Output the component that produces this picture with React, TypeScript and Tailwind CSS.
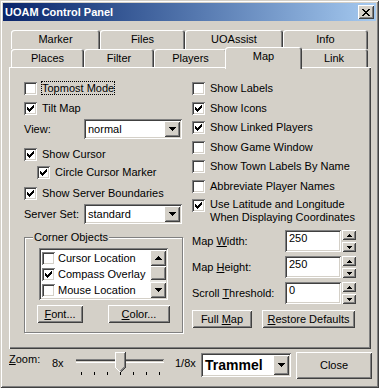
import React from 'react';

const raised =
  'shadow-[inset_1px_1px_0_#fff,inset_-1px_-1px_0_#404040,inset_2px_2px_0_#d4d0c8,inset_-2px_-2px_0_#808080]';
const sunken =
  'shadow-[inset_1px_1px_0_#808080,inset_-1px_-1px_0_#fff,inset_2px_2px_0_#404040,inset_-2px_-2px_0_#d4d0c8]';

function Down({ w = 7, h = 4 }: { w?: number; h?: number }) {
  return (
    <svg width={w} height={h} viewBox={`0 0 ${w} ${h}`} shapeRendering="crispEdges">
      <polygon points={`0,0 ${w},0 ${w / 2},${h}`} fill="#000" />
    </svg>
  );
}

function Up({ w = 7, h = 4 }: { w?: number; h?: number }) {
  return (
    <svg width={w} height={h} viewBox={`0 0 ${w} ${h}`} shapeRendering="crispEdges">
      <polygon points={`0,${h} ${w},${h} ${w / 2},0`} fill="#000" />
    </svg>
  );
}

function Box({ on }: { on?: boolean }) {
  return (
    <span className={`flex h-[13px] w-[13px] shrink-0 items-center justify-center bg-white ${sunken}`}>
      {on && (
        <svg width="7" height="7" viewBox="0 0 7 7" shapeRendering="crispEdges">
          <path
            d="M0 2h1v3H0z M1 3h1v3H1z M2 4h1v3H2z M3 3h1v3H3z M4 2h1v3H4z M5 1h1v3H5z M6 0h1v3H6z"
            fill="#000"
          />
        </svg>
      )}
    </span>
  );
}

function CheckRow({ on, label, className = '' }: { on?: boolean; label: string; className?: string }) {
  return (
    <div className={`flex h-[18px] items-center ${className}`}>
      <Box on={on} />
      <span className="ml-[5px] whitespace-nowrap">{label}</span>
    </div>
  );
}

function Combo({ value, className = '' }: { value: string; className?: string }) {
  return (
    <div className={`flex h-[20px] items-center bg-white ${sunken} ${className}`}>
      <span className="flex-1 pl-[4px]">{value}</span>
      <span className={`mr-[2px] flex h-[16px] w-[16px] items-center justify-center bg-[#d4d0c8] ${raised}`}>
        <Down />
      </span>
    </div>
  );
}

function Button({ children, className = '' }: { children: React.ReactNode; className?: string }) {
  return (
    <div className={`flex items-center justify-center bg-[#d4d0c8] ${raised} ${className}`}>{children}</div>
  );
}

function Tab({ label, w, h }: { label: string; w: number; h: string }) {
  return (
    <div
      style={{ width: w }}
      className={`flex shrink-0 justify-center rounded-t-[3px] bg-[#d4d0c8] pt-[3px] shadow-[inset_1px_1px_0_#fff,inset_-1px_0_0_#404040,inset_-2px_0_0_#808080] ${h}`}
    >
      {label}
    </div>
  );
}

function SpinRow({ label, value, className = '' }: { label: React.ReactNode; value: string; className?: string }) {
  return (
    <div className={`flex h-[22px] items-center ${className}`}>
      <span className="w-[93px] whitespace-nowrap">{label}</span>
      <div className={`h-[22px] w-[56px] bg-white pl-[4px] pt-[2px] ${sunken}`}>{value}</div>
      <div className="ml-[1px] flex flex-col gap-[2px]">
        <Button className="h-[10px] w-[14px]">
          <Up w={5} h={3} />
        </Button>
        <Button className="h-[10px] w-[14px]">
          <Down w={5} h={3} />
        </Button>
      </div>
    </div>
  );
}

function ListItem({ on, label }: { on?: boolean; label: string }) {
  return (
    <div className="flex h-[16px] items-center pl-[1px]">
      <Box on={on} />
      <span className="ml-[3px] whitespace-nowrap">{label}</span>
    </div>
  );
}

export default function App() {
  return (
    <div className="h-[388px] w-[379px] bg-[#d4d0c8] p-[3px] font-['Liberation_Sans',Arial,sans-serif] text-[11px] leading-[13px] text-black shadow-[inset_1px_1px_0_#d4d0c8,inset_-1px_-1px_0_#404040,inset_2px_2px_0_#fff,inset_-2px_-2px_0_#808080]">
      {/* title bar */}
      <div className="flex h-[18px] items-center justify-between bg-linear-to-r from-[#0a246a] to-[#a6caf0] pl-[2px]">
        <span className="font-bold text-white">UOAM Control Panel</span>
        <Button className="mr-[2px] h-[14px] w-[16px]">
          <svg width="8" height="7" viewBox="0 0 8 7" shapeRendering="crispEdges">
            <path
              d="M0 0h2v1H0z M6 0h2v1H6z M1 1h2v1H1z M5 1h2v1H5z M2 2h4v1H2z M3 3h2v1H3z M2 4h4v1H2z M1 5h2v1H1z M5 5h2v1H5z M0 6h2v1H0z M6 6h2v1H6z"
              fill="#000"
            />
          </svg>
        </Button>
      </div>

      <div className="pl-[6px] pt-[9px]">
        {/* tab rows */}
        <div className="ml-[2px] flex h-[19px] items-start">
          <Tab label="Marker" w={89} h="h-[19px]" />
          <Tab label="Files" w={85} h="h-[19px]" />
          <Tab label="UOAssist" w={98} h="h-[19px]" />
          <Tab label="Info" w={85} h="h-[19px]" />
        </div>
        <div className="ml-[2px] flex h-[18px] items-start">
          <Tab label="Places" w={73} h="h-[18px]" />
          <Tab label="Filter" w={70} h="h-[18px]" />
          <Tab label="Players" w={73} h="h-[18px]" />
          <div className="relative z-10 -mx-[2px] -mt-[2px] flex h-[22px] w-[77px] shrink-0 justify-center rounded-t-[3px] bg-[#d4d0c8] pt-[3px] shadow-[inset_1px_1px_0_#fff,inset_-1px_0_0_#404040,inset_-2px_0_0_#808080]">
            Map
          </div>
          <Tab label="Link" w={68} h="h-[18px]" />
        </div>

        {/* panel */}
        <div className="flex h-[282px] w-[362px] bg-[#d4d0c8] pl-[15px] pt-[12px] shadow-[inset_1px_1px_0_#fff,inset_-1px_-1px_0_#404040,inset_-2px_-2px_0_#808080]">
          {/* left column */}
          <div className="flex w-[158px] flex-col">
            <div className="flex h-[18px] items-center">
              <Box />
              <span className="ml-[4px] whitespace-nowrap border border-dotted border-black leading-[12px]">
                Topmost Mode
              </span>
            </div>
            <CheckRow on label="Tilt Map" className="mt-[2px]" />
            <div className="mt-[2px] flex h-[20px] items-center">
              <span className="w-[60px]">View:</span>
              <Combo value="normal" className="w-[98px]" />
            </div>
            <CheckRow on label="Show Cursor" className="mt-[6px]" />
            <CheckRow on label="Circle Cursor Marker" className="pl-[13px]" />
            <CheckRow on label="Show Server Boundaries" className="mt-[3px]" />
            <div className="mt-[2px] flex h-[20px] items-center">
              <span className="w-[60px] whitespace-nowrap">Server Set:</span>
              <Combo value="standard" className="w-[98px]" />
            </div>

            {/* group box */}
            <div className="relative mt-[13px] h-[96px] w-[159px] border border-[#808080] pl-[14px] pt-[10px] shadow-[inset_1px_1px_0_#fff,1px_1px_0_#fff]">
              <span className="absolute -top-[7px] left-[8px] bg-[#d4d0c8] px-[1px]">Corner Objects</span>
              <div className={`flex h-[52px] w-[129px] bg-white p-[2px] ${sunken}`}>
                <div className="flex-1">
                  <ListItem label="Cursor Location" />
                  <ListItem on label="Compass Overlay" />
                  <ListItem label="Mouse Location" />
                </div>
                <div className="flex w-[16px] flex-col">
                  <Button className="h-[16px] w-[16px]">
                    <Up />
                  </Button>
                  <Button className="h-[14px] w-[16px]" />
                  <div className="h-[2px] bg-[#eae8e3]" />
                  <Button className="h-[16px] w-[16px]">
                    <Down />
                  </Button>
                </div>
              </div>
              <div className="-ml-[2px] mt-[5px] flex">
                <Button className="h-[18px] w-[46px]">
                  <span>
                    <u>F</u>ont...
                  </span>
                </Button>
                <Button className="ml-[25px] h-[18px] w-[62px]">
                  <span>
                    <u>C</u>olor...
                  </span>
                </Button>
              </div>
            </div>
          </div>

          {/* right column */}
          <div className="ml-[10px] flex w-[165px] flex-col">
            <CheckRow label="Show Labels" />
            <CheckRow on label="Show Icons" className="mt-[2px]" />
            <CheckRow on label="Show Linked Players" className="mt-[1px]" />
            <CheckRow label="Show Game Window" className="mt-[2px]" />
            <CheckRow label="Show Town Labels By Name" className="mt-[1px]" />
            <CheckRow label="Abbreviate Player Names" className="mt-[2px]" />
            <div className="mt-[3px] flex items-start">
              <span className="mt-[1px]">
                <Box on />
              </span>
              <span className="ml-[5px] whitespace-nowrap">
                Use Latitude and Longitude
                <br />
                When Displaying Coordinates
              </span>
            </div>
            <SpinRow
              className="mt-[6px]"
              label={
                <>
                  Map <u>W</u>idth:
                </>
              }
              value="250"
            />
            <SpinRow
              className="mt-[4px]"
              label={
                <>
                  Map <u>H</u>eight:
                </>
              }
              value="250"
            />
            <SpinRow
              className="mt-[4px]"
              label={
                <>
                  Scroll <u>T</u>hreshold:
                </>
              }
              value="0"
            />
            <div className="mt-[6px] flex">
              <Button className="h-[18px] w-[60px]">
                <span>
                  Full <u>M</u>ap
                </span>
              </Button>
              <Button className="ml-[10px] h-[18px] w-[93px]">
                <span>
                  <u>R</u>estore Defaults
                </span>
              </Button>
            </div>
          </div>
        </div>

        {/* bottom row */}
        <div className="flex h-[36px] items-start">
          <span className="mt-[4px] w-[43px]">
            <u>Z</u>oom:
          </span>
          <span className="mt-[8px] w-[18px]">8x</span>
          <svg width="103" height="28" viewBox="0 0 103 28" className="mt-[1px]" shapeRendering="crispEdges">
            <rect x="6" y="9" width="88" height="1" fill="#808080" />
            <rect x="6" y="10" width="87" height="1" fill="#404040" />
            <rect x="6" y="11" width="88" height="1" fill="#d4d0c8" />
            <rect x="6" y="12" width="88" height="1" fill="#fff" />
            {[11, 24, 37, 50, 63, 76, 89].map((x) => (
              <rect key={x} x={x} y="22" width="1" height="3" fill="#000" />
            ))}
            <polygon points="45,2 56,2 56,17 50.5,22.5 45,17" fill="#d4d0c8" />
            <path d="M45.5 17 V2.5 H55.5" stroke="#fff" fill="none" />
            <path d="M45.5 17.5 L50 22" stroke="#fff" fill="none" />
            <path d="M55.5 2 V17.5 L50.5 22.5" stroke="#404040" fill="none" />
            <path d="M54.5 3 V17 L50.5 21" stroke="#808080" fill="none" />
          </svg>
          <span className="ml-[2px] mt-[8px] w-[26px]">1/8x</span>
          <div className={`mt-[4px] flex h-[24px] w-[90px] items-center bg-white ${sunken}`}>
            <span className="flex-1 pl-[4px] text-[14px] font-bold">Trammel</span>
            <span className={`mr-[2px] flex h-[20px] w-[16px] items-center justify-center bg-[#d4d0c8] ${raised}`}>
              <Down />
            </span>
          </div>
          <Button className="ml-[5px] mt-[3px] h-[27px] w-[76px]">Close</Button>
        </div>
      </div>
    </div>
  );
}
